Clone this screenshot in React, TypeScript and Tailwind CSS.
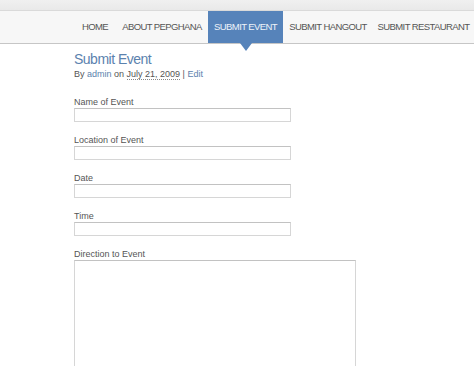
const navItems = [
  { label: 'HOME', width: 'w-[42px]' },
  { label: 'ABOUT PEPGHANA', width: 'w-[92px]' },
  { label: 'SUBMIT EVENT', width: 'w-[75px]', active: true },
  { label: 'SUBMIT HANGOUT', width: 'w-[90px]' },
  { label: 'SUBMIT RESTAURANT', width: 'w-[101px]' },
]

const fields = ['Name of Event', 'Location of Event', 'Date', 'Time']

export default function App() {
  return (
    <div
      className="h-[366px] w-[474px] overflow-hidden bg-white text-[#555]"
      style={{ fontFamily: '"Liberation Sans", Arial, sans-serif' }}
    >
      {/* Top band */}
      <div className="h-[11px] border-b border-[#dadada] bg-gradient-to-b from-[#f0f0f0] to-[#e9e9e9]" />

      {/* Nav */}
      <nav className="flex h-[33px] justify-end border-b border-[#c6c6c6] bg-[#f7f7f7]">
        <div className="flex">
          {navItems.map(item => (
            <div
              key={item.label}
              className={`relative flex h-full items-center justify-center text-[9.5px] tracking-[-0.6px] ${item.width} ${
                item.active ? 'bg-[#5683ba] text-[#eef3f9]' : 'text-[#555]'
              }`}
            >
              {item.label}
              {item.active && (
                <span className="absolute top-full left-1/2 -ml-[6px] h-0 w-0 border-x-[6px] border-t-[8px] border-x-transparent border-t-[#5683ba]" />
              )}
            </div>
          ))}
        </div>
      </nav>

      {/* Content */}
      <div className="pl-[74px]">
        <h1 className="mt-[7px] text-[14px] leading-[16px] tracking-[-0.5px] text-[#5b82ae]">
          Submit Event
        </h1>
        <p className="mt-[1px] text-[9px] leading-[12px] text-[#555]">
          By <span className="text-[#5b82ae]">admin</span> on{' '}
          <span className="border-b border-dotted border-[#888]">July 21, 2009</span> |{' '}
          <span className="text-[#5b82ae]">Edit</span>
        </p>

        <form className="mt-[16px] flex flex-col gap-[12px]">
          {fields.map(f => (
            <div key={f}>
              <label className="block text-[9px] leading-[12px] text-[#555]">{f}</label>
              <input
                type="text"
                className="block h-[14px] w-[217px] border border-[#d6d6d6] border-t-[#c2c2c2] bg-white outline-none"
              />
            </div>
          ))}
          <div>
            <label className="block text-[9px] leading-[12px] text-[#555]">Direction to Event</label>
            <textarea className="block h-[140px] w-[282px] resize-none border border-[#d6d6d6] border-t-[#c2c2c2] bg-white outline-none" />
          </div>
        </form>
      </div>
    </div>
  )
}
